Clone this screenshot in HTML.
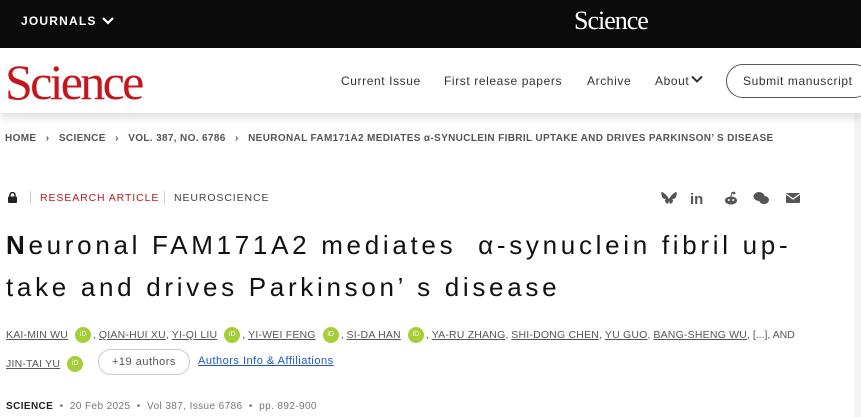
<!DOCTYPE html>
<html><head><meta charset="utf-8"><style>
*{margin:0;padding:0;box-sizing:border-box}
body{width:861px;height:417px;overflow:hidden;background:#fff;font-family:"Liberation Sans",sans-serif;position:relative}
.top{position:absolute;left:0;top:0;width:861px;height:48px;background:#0b0b0b;color:#fff}
.nav{position:absolute;left:0;top:48px;width:861px;height:65px;background:#fff;box-shadow:0 4px 10px rgba(0,0,0,.15);z-index:2}
.strip{position:absolute;left:854px;top:113px;width:7px;height:304px;background:#f3f3f3}
.abs{position:absolute;white-space:nowrap}
.navl{font-size:12px;color:#333;letter-spacing:.6px;top:26px}
.bc{font-size:10px;color:#555;letter-spacing:.35px;top:132px;font-weight:bold}
.title{font-size:26px;color:#111;letter-spacing:3.7px;line-height:42px}
.au{font-size:10.5px;color:#555;text-decoration:underline;letter-spacing:.2px}
.orc{display:inline-block;width:16px;height:16px;border-radius:8px;background:#a6ce39;color:#fff;font-size:7px;text-align:center;line-height:16px;vertical-align:middle;margin:0 2px 0 7px}
</style></head><body>
<div class="top">
 <div class="abs" style="left:21px;top:14px;font-size:12px;font-weight:bold;letter-spacing:1.2px">JOURNALS</div>
 <svg class="abs" style="left:101px;top:16px" width="14" height="10"><path d="M2 2l5 5 5-5" stroke="#fff" stroke-width="2.2" fill="none"/></svg>
 <div class="abs" style="left:574px;top:6px;font-family:'Liberation Serif',serif;font-size:26px;letter-spacing:-1px">Science</div>
</div>
<div class="nav">
 <div class="abs" style="left:5px;top:7px;font-family:'Liberation Serif',serif;font-size:50px;color:#c4161c;letter-spacing:-2.7px;line-height:54px">Science</div>
 <div class="abs navl" style="left:341px">Current Issue</div>
 <div class="abs navl" style="left:444px">First release papers</div>
 <div class="abs navl" style="left:587px">Archive</div>
 <div class="abs navl" style="left:655px">About</div>
 <svg class="abs" style="left:691px;top:27px" width="12" height="9"><path d="M1 1.5l5 5 5-5" stroke="#333" stroke-width="2" fill="none"/></svg>
 <div class="abs" style="left:726px;top:16px;width:145px;height:34px;border:1px solid #555;border-radius:17px;font-size:12px;color:#333;letter-spacing:.6px;padding:9px 0 0 16px">Submit manuscript</div>
</div>
<div class="strip"></div>
<div class="abs bc" style="left:5px;top:133px">HOME &nbsp;&nbsp;›&nbsp;&nbsp; SCIENCE &nbsp;&nbsp;›&nbsp;&nbsp; VOL. 387, NO. 6786 &nbsp;&nbsp;›&nbsp;&nbsp; NEURONAL FAM171A2 MEDIATES α-SYNUCLEIN FIBRIL UPTAKE AND DRIVES PARKINSON’ S DISEASE</div>
<svg class="abs" style="left:8px;top:192px" width="9" height="11"><rect x="0" y="4.5" width="9" height="6.5" rx="1" fill="#222"/><path d="M2 5V3a2.5 2.5 0 015 0v2" stroke="#222" stroke-width="1.5" fill="none"/></svg>
<div class="abs" style="left:30px;top:191px;width:1px;height:13px;background:#ccc"></div>
<div class="abs" style="left:40px;top:192px;font-size:10.5px;color:#c4161c;letter-spacing:.9px">RESEARCH ARTICLE</div>
<div class="abs" style="left:164px;top:191px;width:1px;height:13px;background:#ccc"></div>
<div class="abs" style="left:174px;top:192px;font-size:10.5px;color:#444;letter-spacing:.9px">NEUROSCIENCE</div>
<svg class="abs" style="left:661px;top:190px" width="140" height="16" fill="#555">
 <path d="M1 2c3 1 6 5 7 7 1-2 4-6 7-7 1 0 1 2 0 5-1 2-3 2-4 2 2 1 1 4-2 5L8 11l-1 3c-3-1-4-4-2-5-1 0-3 0-4-2-1-3-1-5 0-5z"/>
 <text x="29" y="14" font-family="Liberation Sans" font-weight="bold" font-size="15">in</text>
 <ellipse cx="70" cy="10.5" rx="6" ry="4"/><circle cx="73" cy="3" r="1.4"/><path d="M70 6.5L71 2.5l2 .5" stroke="#555" fill="none"/><circle cx="67.8" cy="10" r="1" fill="#fff"/><circle cx="72.2" cy="10" r="1" fill="#fff"/>
 <ellipse cx="98" cy="6.5" rx="5.5" ry="4.5"/><ellipse cx="103" cy="10" rx="5" ry="4"/>
 <rect x="125" y="3" width="14" height="10" rx="1"/><path d="M125 4l7 5 7-5" stroke="#fff" stroke-width="1.2" fill="none"/>
</svg>
<div class="abs title" style="left:6px;top:224px"><b>N</b>euronal FAM171A2 mediates &nbsp;α-synuclein fibril up-</div>
<div class="abs title" style="left:6px;top:266px">take and drives Parkinson’ s disease</div>
<div class="abs" style="left:6px;top:327px;font-size:10.5px;color:#555">
<span class="au">KAI-MIN WU</span><span class="orc">iD</span>, <span class="au">QIAN-HUI XU</span>, <span class="au">YI-QI LIU</span><span class="orc">iD</span>, <span class="au">YI-WEI FENG</span><span class="orc">iD</span>, <span class="au">SI-DA HAN</span><span class="orc">iD</span>, <span class="au">YA-RU ZHANG</span>, <span class="au">SHI-DONG CHEN</span>, <span class="au">YU GUO</span>, <span class="au">BANG-SHENG WU</span>, [...], AND</div>
<div class="abs" style="left:6px;top:356px;font-size:10.5px;color:#555"><span class="au">JIN-TAI YU</span><span class="orc">iD</span></div>
<div class="abs" style="left:98px;top:349px;width:92px;height:26px;border:1px solid #ccc;border-radius:13px;font-size:11px;color:#555;padding:6px 0 0 13px;letter-spacing:.5px">+19 authors</div>
<div class="abs" style="left:198px;top:355px;font-size:11px;color:#1a56c9;text-decoration:underline;letter-spacing:.5px">Authors Info &amp; Affiliations</div>
<div class="abs" style="left:6px;top:401px;font-size:10px;color:#777;letter-spacing:.4px"><b style="color:#222">SCIENCE</b> &nbsp;•&nbsp; 20 Feb 2025 &nbsp;•&nbsp; Vol 387, Issue 6786 &nbsp;•&nbsp; pp. 892-900</div>
</body></html>
